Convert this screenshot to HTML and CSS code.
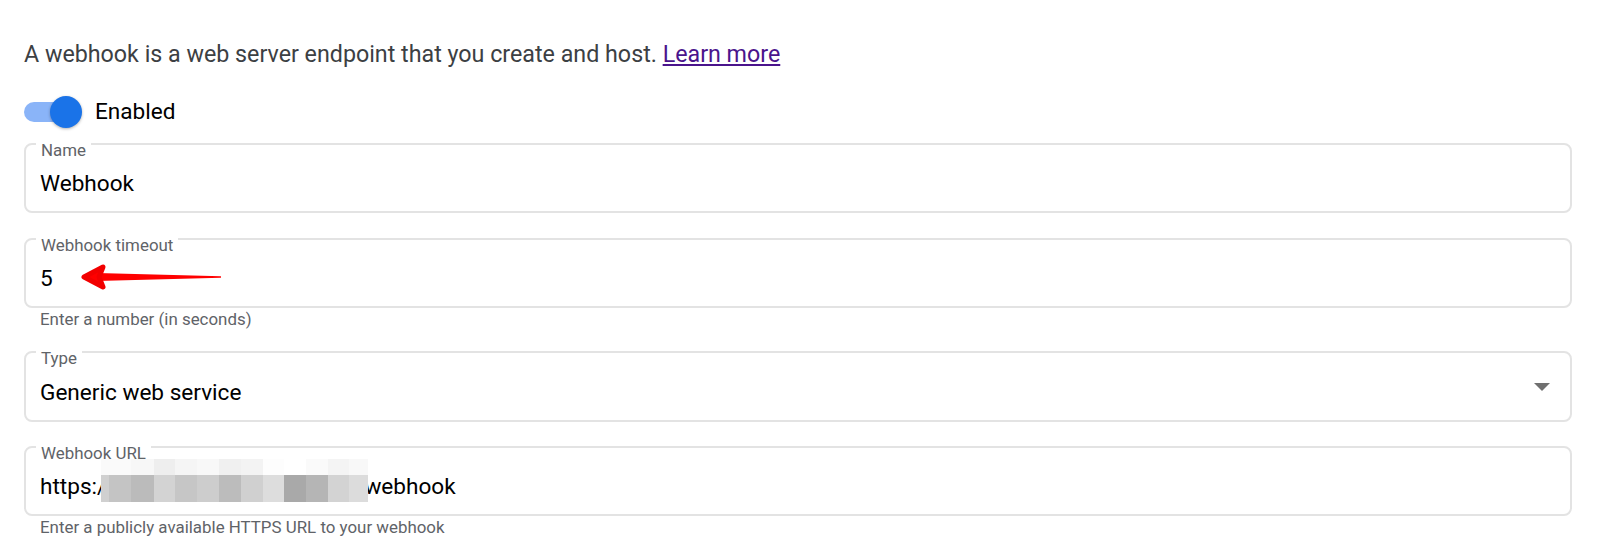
FILE: index.html
```html
<!DOCTYPE html>
<html lang="en">
<head>
<meta charset="utf-8">
<title>Webhook</title>
<link rel="stylesheet" href="styles.css">
</head>
<body>
<main class="page">
  <p class="intro">A webhook is a web server endpoint that you create and host. <a href="#" class="link">Learn more</a></p>

  <div class="toggle-row">
    <span class="switch"><span class="track"></span><span class="thumb"></span></span>
    <span class="toggle-label">Enabled</span>
  </div>

  <fieldset class="field field-first">
    <legend class="field-label">Name</legend>
    <div class="field-value">Webhook</div>
  </fieldset>

  <fieldset class="field field-gap">
    <legend class="field-label">Webhook timeout</legend>
    <div class="field-value value-row">
      <span>5</span>
      <svg class="annot" width="146" height="30" viewBox="0 0 146 30" aria-hidden="true">
        <polygon points="18,11 142,14.3 142,15.7 18,19" fill="#ff0000"/>
        <path d="M5 15 L24 5 L20 15 L24 25 Z" fill="#ff0000" stroke="#f20000" stroke-width="5" stroke-linejoin="round"/>
      </svg>
    </div>
  </fieldset>
  <div class="hint">Enter a number (in seconds)</div>

  <fieldset class="field field-after-hint">
    <legend class="field-label">Type</legend>
    <div class="field-value select-row">
      <span>Generic web service</span>
      <span class="caret"></span>
    </div>
  </fieldset>

  <fieldset class="field field-gap-url">
    <legend class="field-label">Webhook URL</legend>
    <div class="field-value url-row">
      <span>https:/</span><span class="redact"></span><span>webhook</span>
    </div>
  </fieldset>
  <div class="hint hint-url">Enter a publicly available HTTPS URL to your webhook</div>
</main>
</body>
</html>
```

FILE: styles.css
```css
html, body {
  margin: 0;
  background: #ffffff;
}

body {
  font-family: Roboto, "Liberation Sans", Arial, sans-serif;
  color: #202124;
}

.page {
  padding: 0 28px 0 24px;
}

.intro {
  margin: 0;
  padding-top: 41px;
  font-size: 23.25px;
  line-height: 26px;
  color: #3c4043;
}

.link {
  color: #4a148c;
  text-decoration: underline;
  text-underline-offset: 2px;
}

.toggle-row {
  display: flex;
  align-items: center;
  gap: 13px;
  height: 32px;
  margin-top: 29px;
}

.switch {
  position: relative;
  display: flex;
  align-items: center;
  width: 58px;
  height: 32px;
}

.track {
  width: 54px;
  height: 20px;
  border-radius: 10px;
  background: #8ab4f8;
}

.thumb {
  position: absolute;
  right: 0;
  top: 0;
  width: 32px;
  height: 32px;
  border-radius: 50%;
  background: #1a73e8;
  box-shadow: 0 1px 3px rgba(0, 0, 0, 0.3);
}

.toggle-label {
  font-size: 22.6px;
  line-height: 26px;
  color: #000000;
}

.field {
  margin: 0;
  min-width: 0;
  border: 2px solid #e3e3e3;
  border-radius: 8px;
  padding: 11px 20px 13px 14px;
}

.field-first {
  margin-top: 0;
}

.field-gap {
  margin-top: 10px;
}

.field-after-hint {
  margin-top: 8px;
}

.field-gap-url {
  margin-top: 9px;
}

.field-label {
  font-size: 16.9px;
  line-height: 18px;
  color: #5f6368;
  padding: 13px 5px 0;
  margin-left: -4px;
}

.field-value {
  font-size: 22.6px;
  line-height: 28px;
  color: #000000;
}

.value-row {
  display: flex;
  align-items: center;
}

.annot {
  display: block;
  margin: -4px 0 0 26px;
}

.select-row {
  display: flex;
  align-items: center;
  justify-content: space-between;
  min-height: 29px;
}

.caret {
  width: 0;
  height: 0;
  border-left: 8px solid transparent;
  border-right: 8px solid transparent;
  border-top: 8px solid #707070;
  margin-bottom: 11px;
}

.url-row {
  display: flex;
  align-items: flex-end;
}

.redact {
  position: relative;
  z-index: 1;
  display: block;
  flex: none;
  width: 267px;
  height: 43px;
  margin: -14px -4px -1px -5px;
  background:
    linear-gradient(to right,
      #fafafa 0 30px, #f7f7f7 30px 53px, #eeeeee 53px 74px, #f5f5f5 74px 96px,
      #f8f8f8 96px 118px, #f0f0f0 118px 140px, #f3f3f3 140px 162px, #fdfdfd 162px 183px,
      #ffffff 183px 205px, #fafafa 205px 227px, #f4f4f4 227px 248px, #f8f8f8 248px 267px)
      left top / 100% 16px no-repeat,
    linear-gradient(to right,
      #d0d0d0 0 8px, #c4c4c4 8px 30px, #bbbbbb 30px 53px, #d3d3d3 53px 74px,
      #c6c6c6 74px 96px, #cdcdcd 96px 118px, #bcbcbc 118px 140px, #d0d0d0 140px 162px,
      #dddddd 162px 183px, #a9a9a9 183px 205px, #b5b5b5 205px 227px, #d3d3d3 227px 248px,
      #dcdcdc 248px 267px)
      left bottom / 100% 27px no-repeat;
}

.hint {
  margin: 2px 0 0 16px;
  font-size: 16.9px;
  line-height: 18px;
  color: #5f6368;
}

.hint-url {
  margin-top: 2px;
}
```
